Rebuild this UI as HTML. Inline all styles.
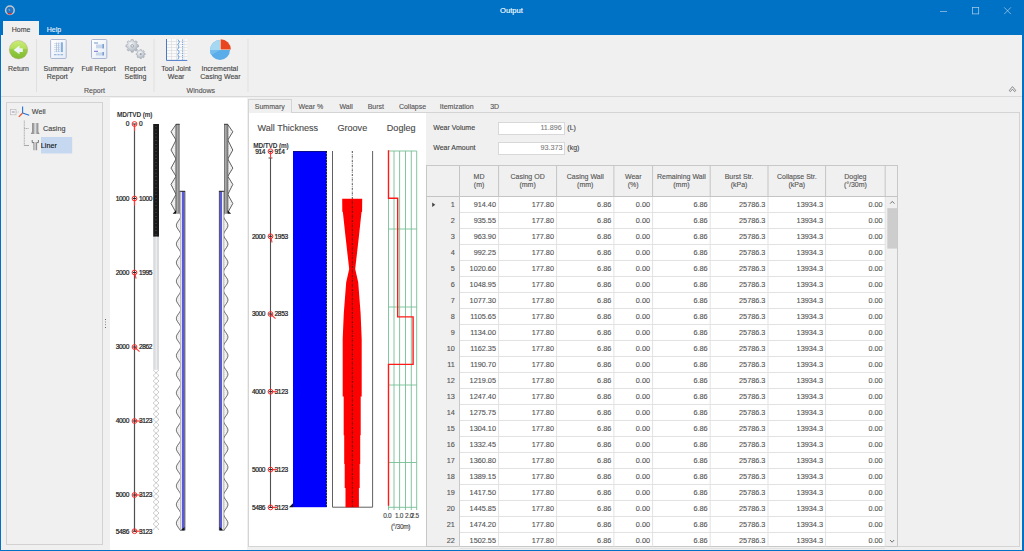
<!DOCTYPE html>
<html><head><meta charset="utf-8">
<style>
*{margin:0;padding:0;box-sizing:border-box}
html,body{width:1024px;height:551px;overflow:hidden}
body{background:#0072c6;position:relative;font-family:"Liberation Sans",sans-serif;font-size:7px;color:#3c3c3c}
.a{position:absolute}
.t{position:absolute;white-space:nowrap;line-height:1;-webkit-text-stroke:0.12px currentColor}
svg{position:absolute;overflow:visible}
</style></head><body>
<!-- title bar -->
<div class="t" style="left:500px;top:7px;font-size:7.6px;color:#fff">Output</div>
<svg style="left:0;top:0" width="1024" height="35">
  <circle cx="9.9" cy="10.3" r="4.3" fill="#1f74c4" stroke="#c4c6ca" stroke-width="1.5"/>
  <path d="M8.2 10 Q10 8 9.6 11" stroke="#8cc0e8" stroke-width="0.6" fill="none"/>
  <path d="M8 13.2 Q9.8 14.6 11.6 13.2" stroke="#d02a2a" stroke-width="1.3" fill="none"/>
  <line x1="940" y1="11.5" x2="947" y2="11.5" stroke="#a9c9ea" stroke-width="0.7"/>
  <rect x="972.4" y="7.6" width="6.3" height="6.3" fill="none" stroke="#b4d0ec" stroke-width="0.7"/>
  <path d="M1004.2 7.4 L1010.9 14.1 M1010.9 7.4 L1004.2 14.1" stroke="#b4d0ec" stroke-width="0.7"/>
</svg>
<!-- ribbon tabs -->
<div class="a" style="left:3px;top:21px;width:35.5px;height:15px;background:#f0f0f0"></div>
<div class="t" style="left:11.8px;top:26.2px;font-size:7px;color:#444">Home</div>
<div class="t" style="left:46.7px;top:26.2px;font-size:7px;color:#e8f0f8">Help</div>
<!-- ribbon body -->
<div class="a" style="left:1px;top:35px;width:1021px;height:62px;background:#f0f0f0;border-bottom:1px solid #d9d9d9"></div>
<!-- main area -->
<div class="a" style="left:1px;top:97px;width:1021px;height:453px;background:#f0f0f0"></div>

<!-- ribbon content -->
<svg style="left:0;top:35px" width="260" height="62">
  <defs>
    <linearGradient id="gGreen" x1="0" y1="0" x2="0" y2="1">
      <stop offset="0" stop-color="#c9ec78"/><stop offset="0.42" stop-color="#b4e05a"/><stop offset="0.5" stop-color="#96cc40"/><stop offset="1" stop-color="#80bc30"/>
    </linearGradient>
    <linearGradient id="gDoc" x1="0" y1="0" x2="1" y2="1">
      <stop offset="0" stop-color="#ffffff"/><stop offset="1" stop-color="#e4ecf6"/>
    </linearGradient>
    <radialGradient id="gGear" cx="0.4" cy="0.35" r="0.7">
      <stop offset="0" stop-color="#f4f6f8"/><stop offset="1" stop-color="#a8b0bc"/>
    </radialGradient>
  </defs>
  <!-- return -->
  <circle cx="18.5" cy="14.7" r="9.2" fill="url(#gGreen)" stroke="#b8a67e" stroke-width="0.5"/>
  <path d="M13.6 15.1 L19.5 10.6 L19.5 13.2 L22.8 13.2 L22.8 17 L19.5 17 L19.5 19.2 Z" fill="#eef4fa"/>
  <line x1="36.5" y1="4" x2="36.5" y2="57" stroke="#e0e0e0" stroke-width="1"/>
  <!-- summary report -->
  <rect x="50.6" y="4.5" width="15.6" height="19" rx="1" fill="url(#gDoc)" stroke="#aab8d6" stroke-width="1"/>
  <g fill="#c4d2e6">
    <rect x="54" y="8" width="6" height="0.7"/><rect x="54" y="10" width="6" height="0.7"/>
    <rect x="54" y="12" width="6" height="0.7"/><rect x="54" y="14" width="6" height="0.7"/>
    <rect x="54" y="16" width="6" height="0.7"/>
  </g>
  <rect x="56" y="7.5" width="0.9" height="9.6" fill="#b0c4e0"/>
  <rect x="58.2" y="7.5" width="0.9" height="9.6" fill="#b0c4e0"/>
  <rect x="60.8" y="7.3" width="2.1" height="9.8" fill="#86aedc"/>
  <rect x="54" y="19.3" width="2.6" height="0.9" fill="#7aa2d4"/><rect x="57.4" y="19.3" width="2.2" height="0.9" fill="#7aa2d4"/><rect x="60.4" y="19.3" width="2.6" height="0.9" fill="#7aa2d4"/>
  <!-- full report -->
  <rect x="91.5" y="4.5" width="15.3" height="19" rx="1" fill="url(#gDoc)" stroke="#a8b6d4" stroke-width="1"/>
  <rect x="94" y="7.5" width="4" height="1" fill="#6f98cc"/>
  <rect x="96" y="9.5" width="7" height="3.8" fill="#c8d6ea"/>
  <rect x="102.5" y="9" width="1.4" height="4.5" fill="#6f98cc"/>
  <rect x="94" y="15.8" width="4" height="1" fill="#7a6fd0"/>
  <rect x="96" y="17.5" width="7" height="3" fill="#c8d6ea"/>
  <rect x="102.5" y="17" width="1.4" height="3.5" fill="#6f98cc"/>
  <!-- gears -->
  <g transform="translate(132.2,10.9) scale(0.84)">
    <path d="M-1.2,-6.2 L1.2,-6.2 L1.6,-4.4 L3,-3.8 L4.6,-4.9 L6.2,-3.3 L5.1,-1.7 L5.7,-0.3 L7.5,0.1 L7.5,2.5 L5.7,2.9 L5.1,4.3 L6.2,5.9 L4.6,7.5 L3,6.4 L1.6,7 L1.2,8.8 L-1.2,8.8 L-1.6,7 L-3,6.4 L-4.6,7.5 L-6.2,5.9 L-5.1,4.3 L-5.7,2.9 L-7.5,2.5 L-7.5,0.1 L-5.7,-0.3 L-5.1,-1.7 L-6.2,-3.3 L-4.6,-4.9 L-3,-3.8 L-1.6,-4.4 Z" transform="translate(0,-1.3)" fill="url(#gGear)" stroke="#8e96a2" stroke-width="0.5"/>
    <circle cx="0" cy="0" r="1.6" fill="#e8eaee" stroke="#7a828e" stroke-width="0.7"/>
  </g>
  <g transform="translate(140.7,19.1) scale(0.6)">
    <path d="M-1.2,-6.2 L1.2,-6.2 L1.6,-4.4 L3,-3.8 L4.6,-4.9 L6.2,-3.3 L5.1,-1.7 L5.7,-0.3 L7.5,0.1 L7.5,2.5 L5.7,2.9 L5.1,4.3 L6.2,5.9 L4.6,7.5 L3,6.4 L1.6,7 L1.2,8.8 L-1.2,8.8 L-1.6,7 L-3,6.4 L-4.6,7.5 L-6.2,5.9 L-5.1,4.3 L-5.7,2.9 L-7.5,2.5 L-7.5,0.1 L-5.7,-0.3 L-5.1,-1.7 L-6.2,-3.3 L-4.6,-4.9 L-3,-3.8 L-1.6,-4.4 Z" transform="translate(0,-1.3)" fill="url(#gGear)" stroke="#8e96a2" stroke-width="0.7"/>
    <circle cx="0" cy="0" r="1.8" fill="#9aa2ae"/>
  </g>
  <line x1="154" y1="4" x2="154" y2="57" stroke="#e0e0e0" stroke-width="1"/>
  <!-- tool joint wear -->
  <rect x="166" y="4" width="21.3" height="21.8" fill="#fafafa"/>
  <g stroke="#d8d8d8" stroke-width="0.6">
    <line x1="166" y1="6.5" x2="187.3" y2="6.5"/><line x1="166" y1="9.5" x2="187.3" y2="9.5"/>
    <line x1="166" y1="12.5" x2="187.3" y2="12.5"/><line x1="166" y1="15.5" x2="187.3" y2="15.5"/>
    <line x1="166" y1="18.5" x2="187.3" y2="18.5"/><line x1="166" y1="21.5" x2="187.3" y2="21.5"/>
    <line x1="171.5" y1="4" x2="171.5" y2="25.5"/><line x1="176.5" y1="4" x2="176.5" y2="25.5"/>
    <line x1="184" y1="4" x2="184" y2="25.5"/>
  </g>
  <path d="M166.5 4 L166.5 25.4 L187.3 25.4" stroke="#4a78c8" stroke-width="1" fill="none"/>
  <path d="M178 4.5 L179.5 7 L177.8 9.5 L179 12 L177.5 14.5 L179.3 17 L177.8 19.5 L179 22 L177.8 24.5" stroke="#5a9ae0" stroke-width="0.9" fill="none"/>
  <line x1="182.5" y1="4.5" x2="182.5" y2="25" stroke="#4a8ee0" stroke-width="0.8" stroke-dasharray="1.2 1"/>
  <!-- pie -->
  <path d="M220 50 L220 40 A10 10 0 1 0 230 50 Z" transform="translate(0,-35)" fill="#5aade8"/>
  <path d="M220 50 L220 40 A10 10 0 0 0 210 50 Z" transform="translate(0,-35)" fill="#a6d8f2"/>
  <path d="M220 50 L210 50 A10 10 0 0 0 211.3 55 Z" transform="translate(0,-35)" fill="#72bdee"/>
  <path d="M220.6 49.4 L220.6 39.2 A10.2 10.2 0 0 1 230.8 49.4 Z" transform="translate(0,-35)" fill="#e8461e"/>
  <line x1="248" y1="4" x2="248" y2="57" stroke="#e0e0e0" stroke-width="1"/>
</svg>
<div class="t" style="left:8px;top:64.5px;color:#444">Return</div>
<div class="t" style="left:43.6px;top:64.7px;color:#444">Summary</div>
<div class="t" style="left:46.8px;top:72.6px;color:#444">Report</div>
<div class="t" style="left:81.4px;top:64.7px;color:#444">Full Report</div>
<div class="t" style="left:124.6px;top:64.7px;color:#444">Report</div>
<div class="t" style="left:124.6px;top:72.6px;color:#444">Setting</div>
<div class="t" style="left:161.2px;top:64.7px;color:#444">Tool Joint</div>
<div class="t" style="left:167.8px;top:72.6px;color:#444">Wear</div>
<div class="t" style="left:201.5px;top:64.7px;color:#444">Incremental</div>
<div class="t" style="left:200.2px;top:72.6px;color:#444">Casing Wear</div>
<div class="t" style="left:84px;top:86.7px;color:#555">Report</div>
<div class="t" style="left:186.6px;top:86.7px;color:#555">Windows</div>
<svg style="left:1005px;top:84px" width="14" height="10">
  <path d="M4.2 6.6 L7.5 2.6 L10.8 6.6 L9.6 7.6 L7.5 5.2 L5.4 7.6 Z" stroke="#707070" stroke-width="0.8" fill="none" stroke-linejoin="round"/>
</svg>

<!-- tree panel -->
<div class="a" style="left:6px;top:102px;width:96.5px;height:443px;border:1px solid #d2d2d2;background:#f0f0f0"></div>
<svg style="left:0;top:100px" width="110" height="60">
  <rect x="10.5" y="9.3" width="5.5" height="5.5" fill="#f4f4f4" stroke="#b4b4b4" stroke-width="0.6"/>
  <line x1="11.8" y1="12" x2="14.7" y2="12" stroke="#5a6e8c" stroke-width="0.7"/>
  <line x1="16.3" y1="12" x2="19" y2="12" stroke="#a0a0a0" stroke-width="0.6" stroke-dasharray="0.8 0.8"/>
  <line x1="22.6" y1="6.5" x2="22.6" y2="13" stroke="#1f73d8" stroke-width="1.1"/>
  <line x1="22.6" y1="13" x2="29.2" y2="15.3" stroke="#1f73d8" stroke-width="1.1"/>
  <line x1="22.6" y1="13" x2="18.8" y2="16.8" stroke="#e8502a" stroke-width="1.2"/>
  <line x1="24.3" y1="20.5" x2="24.3" y2="45.5" stroke="#777" stroke-width="0.6" stroke-dasharray="1 0.6"/>
  <line x1="24.3" y1="28.5" x2="29" y2="28.5" stroke="#777" stroke-width="0.6" stroke-dasharray="1 0.6"/>
  <line x1="24.3" y1="45.5" x2="29" y2="45.5" stroke="#777" stroke-width="0.6"/>
  <!-- casing icon -->
  <defs><linearGradient id="gCas" x1="0" y1="0" x2="1" y2="0">
    <stop offset="0" stop-color="#8a8a8a"/><stop offset="0.3" stop-color="#9c9c9c"/><stop offset="0.5" stop-color="#e6e6e6"/><stop offset="0.7" stop-color="#a0a0a0"/><stop offset="1" stop-color="#858585"/>
  </linearGradient></defs>
  <path d="M30.8 34 L32 31.8 L32 23 L38.4 23 L38.4 31.8 L39.6 34 Z" fill="url(#gCas)"/>
  <!-- liner icon -->
  <path d="M32.2 40 L32.2 42.6 L34 42.6 L34 50.2 M38.4 40 L38.4 42.6 L36.6 42.6 L36.6 50.2" stroke="#5a5a5a" stroke-width="0.8" fill="none"/>
  <rect x="34.4" y="42" width="1.8" height="8.2" fill="#c8c8c8"/>
  <rect x="41" y="37" width="31.2" height="16.5" fill="#c5d8f0"/>
</svg>
<div class="t" style="left:31.8px;top:107.8px;color:#444;font-size:7.2px">Well</div>
<div class="t" style="left:43px;top:124.7px;color:#444;font-size:7.2px">Casing</div>
<div class="t" style="left:40.8px;top:141.9px;color:#111;font-size:7.2px">Liner</div>
<svg style="left:100px;top:310px" width="10" height="20">
  <rect x="5" y="9" width="1" height="1" fill="#666"/><rect x="5" y="11.5" width="1" height="1" fill="#888"/>
  <rect x="5" y="14.2" width="1" height="1" fill="#888"/><rect x="5" y="17" width="1" height="1" fill="#666"/>
</svg>

<!--SCHEM--><!-- schematic -->
<div class="a" style="left:110px;top:98px;width:137px;height:452px;background:#fff"></div>
<svg style="left:0;top:0" width="1024" height="551">
<line x1="134.5" y1="126" x2="134.5" y2="531.5" stroke="#505050" stroke-width="1.2"/>
<line x1="134.5" y1="124" x2="134.5" y2="131" stroke="#f03030" stroke-width="1"/>
<line x1="134.5" y1="124" x2="134.5" y2="131" stroke="#ff3a3a" stroke-width="1.1"/>
<circle cx="134.5" cy="124" r="2.4" fill="none" stroke="#ff2828" stroke-width="1"/>
<line x1="132.8" y1="124" x2="136.2" y2="124" stroke="#222" stroke-width="1"/>
<line x1="134.5" y1="198.5" x2="134.5" y2="205.5" stroke="#ff3a3a" stroke-width="1.1"/>
<circle cx="134.5" cy="198.5" r="2.4" fill="none" stroke="#ff2828" stroke-width="1"/>
<line x1="132.8" y1="198.5" x2="136.2" y2="198.5" stroke="#222" stroke-width="1"/>
<line x1="134.5" y1="272.5" x2="136.1" y2="278.7" stroke="#ff3a3a" stroke-width="1.1"/>
<circle cx="134.5" cy="272.5" r="2.4" fill="none" stroke="#ff2828" stroke-width="1"/>
<line x1="132.8" y1="272.5" x2="136.2" y2="272.5" stroke="#222" stroke-width="1"/>
<line x1="134.5" y1="347" x2="139.5" y2="351.6" stroke="#ff3a3a" stroke-width="1.1"/>
<circle cx="134.5" cy="347" r="2.4" fill="none" stroke="#ff2828" stroke-width="1"/>
<line x1="132.8" y1="347" x2="136.2" y2="347" stroke="#222" stroke-width="1"/>
<line x1="134.5" y1="421" x2="141.3" y2="421" stroke="#ff3a3a" stroke-width="1.1"/>
<circle cx="134.5" cy="421" r="2.4" fill="none" stroke="#ff2828" stroke-width="1"/>
<line x1="132.8" y1="421" x2="136.2" y2="421" stroke="#222" stroke-width="1"/>
<line x1="134.5" y1="495" x2="141.3" y2="495" stroke="#ff3a3a" stroke-width="1.1"/>
<circle cx="134.5" cy="495" r="2.4" fill="none" stroke="#ff2828" stroke-width="1"/>
<line x1="132.8" y1="495" x2="136.2" y2="495" stroke="#222" stroke-width="1"/>
<line x1="134.5" y1="531.2" x2="141.3" y2="531.2" stroke="#ff3a3a" stroke-width="1.1"/>
<circle cx="134.5" cy="531.2" r="2.4" fill="none" stroke="#ff2828" stroke-width="1"/>
<line x1="132.8" y1="531.2" x2="136.2" y2="531.2" stroke="#222" stroke-width="1"/>
<rect x="153.2" y="124" width="5.8" height="112.8" fill="#1a1a1a"/>
<line x1="156" y1="126" x2="156" y2="236" stroke="#bbb" stroke-width="0.6" stroke-dasharray="0.6 3"/>
<rect x="153.2" y="236.8" width="5.8" height="133" fill="#d9dbde"/>
<rect x="155.5" y="236.8" width="1.4" height="133" fill="#eceef0"/>
<defs><pattern id="xh" x="153.2" y="370" width="5.8" height="5.5" patternUnits="userSpaceOnUse"><path d="M0 0 L5.8 5.5 M5.8 0 L0 5.5" stroke="#a8a8a8" stroke-width="0.6"/></pattern>
<pattern id="dots" width="2" height="2" patternUnits="userSpaceOnUse"><rect width="2" height="2" fill="#f2f2f2"/><rect x="0" y="0" width="0.7" height="0.7" fill="#d8d8d8"/></pattern></defs>
<rect x="153.2" y="370" width="5.8" height="160" fill="url(#xh)"/>
<path d="M176.00 124.50 L171.00 131.80 L176.00 140.00 L171.00 150.00 L176.00 159.00 L171.00 168.10 L176.00 176.30 L171.00 184.40 L176.00 194.40 L171.00 203.50 L176.00 212.60 Z" fill="url(#dots)" stroke="#454545" stroke-width="0.85" stroke-linejoin="round"/>
<path d="M227.80 124.50 L232.80 131.80 L227.80 140.00 L232.80 150.00 L227.80 159.00 L232.80 168.10 L227.80 176.30 L232.80 184.40 L227.80 194.40 L232.80 203.50 L227.80 212.60 Z" fill="url(#dots)" stroke="#454545" stroke-width="0.85" stroke-linejoin="round"/>
<path d="M180.70 213.80 L180.09 213.80 L180.50 214.80 L180.69 215.80 L180.64 216.80 L180.36 217.79 L179.87 218.79 L179.23 219.79 L178.52 220.79 L177.81 221.79 L177.18 222.79 L176.71 223.78 L176.45 224.78 L176.42 225.78 L176.63 226.78 L177.06 227.78 L177.65 228.78 L178.35 229.77 L179.07 230.77 L179.73 231.77 L180.26 232.77 L180.59 233.77 L180.70 234.77 L180.56 235.77 L180.20 236.76 L179.65 237.76 L178.98 238.76 L178.26 239.76 L177.57 240.76 L176.99 241.76 L176.59 242.75 L176.41 243.75 L176.47 244.75 L176.76 245.75 L177.26 246.75 L177.90 247.75 L178.61 248.74 L179.32 249.74 L179.94 250.74 L180.40 251.74 L180.66 252.74 L180.68 253.74 L180.46 254.74 L180.02 255.73 L179.42 256.73 L178.72 257.73 L178.00 258.73 L177.35 259.73 L176.82 260.73 L176.50 261.72 L176.40 262.72 L176.55 263.72 L176.92 264.72 L177.47 265.72 L178.15 266.72 L178.87 267.71 L179.56 268.71 L180.13 269.71 L180.52 270.71 L180.69 271.71 L180.63 272.71 L180.32 273.71 L179.82 274.70 L179.18 275.70 L178.46 276.70 L177.76 277.70 L177.14 278.70 L176.68 279.70 L176.44 280.69 L176.43 281.69 L176.66 282.69 L177.10 283.69 L177.71 284.69 L178.41 285.69 L179.13 286.68 L179.78 287.68 L180.29 288.68 L180.61 289.68 L180.70 290.68 L180.54 291.68 L180.16 292.68 L179.60 293.67 L178.92 294.67 L178.20 295.67 L177.52 296.67 L176.95 297.67 L176.57 298.67 L176.40 299.66 L176.48 300.66 L176.79 301.66 L177.30 302.66 L177.95 303.66 L178.67 304.66 L179.37 305.65 L179.98 306.65 L180.43 307.65 L180.67 308.65 L180.67 309.65 L180.43 310.65 L179.98 311.65 L179.37 312.64 L178.66 313.64 L177.95 314.64 L177.30 315.64 L176.79 316.64 L176.48 317.64 L176.40 318.63 L176.57 319.63 L176.96 320.63 L177.52 321.63 L178.21 322.63 L178.93 323.63 L179.61 324.62 L180.17 325.62 L180.54 326.62 L180.70 327.62 L180.61 328.62 L180.29 329.62 L179.77 330.62 L179.12 331.61 L178.40 332.61 L177.70 333.61 L177.10 334.61 L176.65 335.61 L176.43 336.61 L176.44 337.60 L176.69 338.60 L177.14 339.60 L177.76 340.60 L178.47 341.60 L179.18 342.60 L179.83 343.59 L180.33 344.59 L180.63 345.59 L180.69 346.59 L180.52 347.59 L180.12 348.59 L179.55 349.59 L178.86 350.58 L178.14 351.58 L177.47 352.58 L176.91 353.58 L176.54 354.58 L176.40 355.58 L176.50 356.57 L176.83 357.57 L177.35 358.57 L178.01 359.57 L178.73 360.57 L179.43 361.57 L180.03 362.56 L180.46 363.56 L180.68 364.56 L180.66 365.56 L180.40 366.56 L179.93 367.56 L179.31 368.56 L178.60 369.55 L177.89 370.55 L177.25 371.55 L176.76 372.55 L176.47 373.55 L176.41 374.55 L176.59 375.54 L177.00 376.54 L177.58 377.54 L178.27 378.54 L178.99 379.54 L179.66 380.54 L180.21 381.54 L180.57 382.53 L180.70 383.53 L180.59 384.53 L180.25 385.53 L179.72 386.53 L179.06 387.53 L178.34 388.52 L177.65 389.52 L177.05 390.52 L176.63 391.52 L176.42 392.52 L176.45 393.52 L176.72 394.51 L177.19 395.51 L177.82 396.51 L178.53 397.51 L179.24 398.51 L179.87 399.51 L180.36 400.51 L180.64 401.50 L180.69 402.50 L180.49 403.50 L180.08 404.50 L179.50 405.50 L178.80 406.50 L178.08 407.49 L177.42 408.49 L176.88 409.49 L176.52 410.49 L176.40 411.49 L176.52 412.49 L176.86 413.48 L177.40 414.48 L178.07 415.48 L178.79 416.48 L179.48 417.48 L180.07 418.48 L180.49 419.48 L180.69 420.47 L180.65 421.47 L180.37 422.47 L179.89 423.47 L179.26 424.47 L178.54 425.47 L177.83 426.46 L177.20 427.46 L176.72 428.46 L176.45 429.46 L176.41 430.46 L176.62 431.46 L177.04 432.45 L177.63 433.45 L178.32 434.45 L179.04 435.45 L179.71 436.45 L180.24 437.45 L180.59 438.45 L180.70 439.44 L180.57 440.44 L180.22 441.44 L179.67 442.44 L179.00 443.44 L178.28 444.44 L177.59 445.43 L177.01 446.43 L176.60 447.43 L176.41 448.43 L176.46 449.43 L176.75 450.43 L177.24 451.42 L177.87 452.42 L178.59 453.42 L179.29 454.42 L179.92 455.42 L180.39 456.42 L180.65 457.42 L180.68 458.41 L180.47 459.41 L180.04 460.41 L179.44 461.41 L178.75 462.41 L178.03 463.41 L177.37 464.40 L176.84 465.40 L176.50 466.40 L176.40 467.40 L176.54 468.40 L176.90 469.40 L177.45 470.39 L178.12 471.39 L178.85 472.39 L179.53 473.39 L180.11 474.39 L180.51 475.39 L180.69 476.39 L180.63 477.38 L180.34 478.38 L179.84 479.38 L179.20 480.38 L178.48 481.38 L177.78 482.38 L177.16 483.37 L176.69 484.37 L176.44 485.37 L176.42 486.37 L176.65 487.37 L177.08 488.37 L177.68 489.36 L178.38 490.36 L179.10 491.36 L179.76 492.36 L180.28 493.36 L180.60 494.36 L180.70 495.36 L180.55 496.35 L180.18 497.35 L179.62 498.35 L178.95 499.35 L178.22 500.35 L177.54 501.35 L176.97 502.34 L176.58 503.34 L176.41 504.34 L176.48 505.34 L176.78 506.34 L177.28 507.34 L177.93 508.33 L178.64 509.33 L179.35 510.33 L179.96 511.33 L180.42 512.33 L180.67 513.33 L180.67 514.33 L180.44 515.32 L180.00 516.32 L179.39 517.32 L178.69 518.32 L177.97 519.32 L177.32 520.32 L176.80 521.31 L176.49 522.31 L176.40 523.31 L176.56 524.31 L176.94 525.31 L177.50 526.31 L178.18 527.30 L178.90 528.30 L179.59 529.30 L180.15 530.30 L180.70 530.30 Z" fill="url(#dots)" stroke="#454545" stroke-width="0.85" stroke-linejoin="round"/>
<path d="M223.60 213.80 L224.21 213.80 L223.80 214.80 L223.61 215.80 L223.66 216.80 L223.94 217.79 L224.43 218.79 L225.07 219.79 L225.78 220.79 L226.49 221.79 L227.12 222.79 L227.59 223.78 L227.85 224.78 L227.88 225.78 L227.67 226.78 L227.24 227.78 L226.65 228.78 L225.95 229.77 L225.23 230.77 L224.57 231.77 L224.04 232.77 L223.71 233.77 L223.60 234.77 L223.74 235.77 L224.10 236.76 L224.65 237.76 L225.32 238.76 L226.04 239.76 L226.73 240.76 L227.31 241.76 L227.71 242.75 L227.89 243.75 L227.83 244.75 L227.54 245.75 L227.04 246.75 L226.40 247.75 L225.69 248.74 L224.98 249.74 L224.36 250.74 L223.90 251.74 L223.64 252.74 L223.62 253.74 L223.84 254.74 L224.28 255.73 L224.88 256.73 L225.58 257.73 L226.30 258.73 L226.95 259.73 L227.48 260.73 L227.80 261.72 L227.90 262.72 L227.75 263.72 L227.38 264.72 L226.83 265.72 L226.15 266.72 L225.43 267.71 L224.74 268.71 L224.17 269.71 L223.78 270.71 L223.61 271.71 L223.67 272.71 L223.98 273.71 L224.48 274.70 L225.12 275.70 L225.84 276.70 L226.54 277.70 L227.16 278.70 L227.62 279.70 L227.86 280.69 L227.87 281.69 L227.64 282.69 L227.20 283.69 L226.59 284.69 L225.89 285.69 L225.17 286.68 L224.52 287.68 L224.01 288.68 L223.69 289.68 L223.60 290.68 L223.76 291.68 L224.14 292.68 L224.70 293.67 L225.38 294.67 L226.10 295.67 L226.78 296.67 L227.35 297.67 L227.73 298.67 L227.90 299.66 L227.82 300.66 L227.51 301.66 L227.00 302.66 L226.35 303.66 L225.63 304.66 L224.93 305.65 L224.32 306.65 L223.87 307.65 L223.63 308.65 L223.63 309.65 L223.87 310.65 L224.32 311.65 L224.93 312.64 L225.64 313.64 L226.35 314.64 L227.00 315.64 L227.51 316.64 L227.82 317.64 L227.90 318.63 L227.73 319.63 L227.34 320.63 L226.78 321.63 L226.09 322.63 L225.37 323.63 L224.69 324.62 L224.13 325.62 L223.76 326.62 L223.60 327.62 L223.69 328.62 L224.01 329.62 L224.53 330.62 L225.18 331.61 L225.90 332.61 L226.60 333.61 L227.20 334.61 L227.65 335.61 L227.87 336.61 L227.86 337.60 L227.61 338.60 L227.16 339.60 L226.54 340.60 L225.83 341.60 L225.12 342.60 L224.47 343.59 L223.97 344.59 L223.67 345.59 L223.61 346.59 L223.78 347.59 L224.18 348.59 L224.75 349.59 L225.44 350.58 L226.16 351.58 L226.83 352.58 L227.39 353.58 L227.76 354.58 L227.90 355.58 L227.80 356.57 L227.47 357.57 L226.95 358.57 L226.29 359.57 L225.57 360.57 L224.87 361.57 L224.27 362.56 L223.84 363.56 L223.62 364.56 L223.64 365.56 L223.90 366.56 L224.37 367.56 L224.99 368.56 L225.70 369.55 L226.41 370.55 L227.05 371.55 L227.54 372.55 L227.83 373.55 L227.89 374.55 L227.71 375.54 L227.30 376.54 L226.72 377.54 L226.03 378.54 L225.31 379.54 L224.64 380.54 L224.09 381.54 L223.73 382.53 L223.60 383.53 L223.71 384.53 L224.05 385.53 L224.58 386.53 L225.24 387.53 L225.96 388.52 L226.65 389.52 L227.25 390.52 L227.67 391.52 L227.88 392.52 L227.85 393.52 L227.58 394.51 L227.11 395.51 L226.48 396.51 L225.77 397.51 L225.06 398.51 L224.43 399.51 L223.94 400.51 L223.66 401.50 L223.61 402.50 L223.81 403.50 L224.22 404.50 L224.80 405.50 L225.50 406.50 L226.22 407.49 L226.88 408.49 L227.42 409.49 L227.78 410.49 L227.90 411.49 L227.78 412.49 L227.44 413.48 L226.90 414.48 L226.23 415.48 L225.51 416.48 L224.82 417.48 L224.23 418.48 L223.81 419.48 L223.61 420.47 L223.65 421.47 L223.93 422.47 L224.41 423.47 L225.04 424.47 L225.76 425.47 L226.47 426.46 L227.10 427.46 L227.58 428.46 L227.85 429.46 L227.89 430.46 L227.68 431.46 L227.26 432.45 L226.67 433.45 L225.98 434.45 L225.26 435.45 L224.59 436.45 L224.06 437.45 L223.71 438.45 L223.60 439.44 L223.73 440.44 L224.08 441.44 L224.63 442.44 L225.30 443.44 L226.02 444.44 L226.71 445.43 L227.29 446.43 L227.70 447.43 L227.89 448.43 L227.84 449.43 L227.55 450.43 L227.06 451.42 L226.43 452.42 L225.71 453.42 L225.01 454.42 L224.38 455.42 L223.91 456.42 L223.65 457.42 L223.62 458.41 L223.83 459.41 L224.26 460.41 L224.86 461.41 L225.55 462.41 L226.27 463.41 L226.93 464.40 L227.46 465.40 L227.80 466.40 L227.90 467.40 L227.76 468.40 L227.40 469.40 L226.85 470.39 L226.18 471.39 L225.45 472.39 L224.77 473.39 L224.19 474.39 L223.79 475.39 L223.61 476.39 L223.67 477.38 L223.96 478.38 L224.46 479.38 L225.10 480.38 L225.82 481.38 L226.52 482.38 L227.14 483.37 L227.61 484.37 L227.86 485.37 L227.88 486.37 L227.65 487.37 L227.22 488.37 L226.62 489.36 L225.92 490.36 L225.20 491.36 L224.54 492.36 L224.02 493.36 L223.70 494.36 L223.60 495.36 L223.75 496.35 L224.12 497.35 L224.68 498.35 L225.35 499.35 L226.08 500.35 L226.76 501.35 L227.33 502.34 L227.72 503.34 L227.89 504.34 L227.82 505.34 L227.52 506.34 L227.02 507.34 L226.37 508.33 L225.66 509.33 L224.95 510.33 L224.34 511.33 L223.88 512.33 L223.63 513.33 L223.63 514.33 L223.86 515.32 L224.30 516.32 L224.91 517.32 L225.61 518.32 L226.33 519.32 L226.98 520.32 L227.50 521.31 L227.81 522.31 L227.90 523.31 L227.74 524.31 L227.36 525.31 L226.80 526.31 L226.12 527.30 L225.40 528.30 L224.71 529.30 L224.15 530.30 L223.60 530.30 Z" fill="url(#dots)" stroke="#454545" stroke-width="0.85" stroke-linejoin="round"/>
<rect x="175.8" y="124.2" width="3.9" height="89.4" fill="#7a7a7a"/>
<rect x="176.8" y="124.2" width="1.6" height="89.4" fill="#a8a8a8"/>
<rect x="175.8" y="123.8" width="3.9" height="1" fill="#3a3a3a"/>
<rect x="224" y="124.2" width="3.9" height="89.4" fill="#7a7a7a"/>
<rect x="225.0" y="124.2" width="1.6" height="89.4" fill="#a8a8a8"/>
<rect x="224" y="123.8" width="3.9" height="1" fill="#3a3a3a"/>
<path d="M176 213.8 L172.6 213.8 L176 210.2 Z" fill="#111"/>
<path d="M227.7 213.8 L231.1 213.8 L227.7 210.2 Z" fill="#111"/>
<rect x="180.4" y="191.3" width="4.3" height="339" fill="#f0f0f0"/>
<rect x="181.9" y="191.3" width="2.7" height="339" fill="#5a5ad8"/>
<rect x="184.6" y="191.3" width="0.7" height="339" fill="#333"/>
<rect x="179.6" y="190.8" width="5.5" height="1" fill="#222"/>
<rect x="179.6" y="191.3" width="0.8" height="22.5" fill="#666"/>
<rect x="219.4" y="191.3" width="4.3" height="339" fill="#f0f0f0"/>
<rect x="219.4" y="191.3" width="2.6" height="339" fill="#5a5ad8"/>
<rect x="218.9" y="191.3" width="0.7" height="339" fill="#333"/>
<rect x="218.9" y="190.8" width="5.5" height="1" fill="#222"/>
<rect x="223.6" y="191.3" width="0.8" height="22.5" fill="#666"/>
<path d="M184.5 530.5 L180.5 530.5 L184.5 527 Z" fill="#111"/>
<path d="M219.6 530.5 L223.6 530.5 L219.6 527 Z" fill="#111"/>
</svg>
<div class="t" style="left:117px;top:112.2px;font-size:6.5px;font-weight:bold;letter-spacing:-0.15px;color:#333;-webkit-text-stroke:0">MD/TVD (m)</div>
<div class="t" style="right:895.1px;top:121.4px;font-size:6.6px;letter-spacing:-0.4px;color:#222;-webkit-text-stroke:0.22px #222">0</div>
<div class="t" style="left:139px;top:121.4px;font-size:6.6px;letter-spacing:-0.4px;color:#222;-webkit-text-stroke:0.22px #222">0</div>
<div class="t" style="right:895.1px;top:195.9px;font-size:6.6px;letter-spacing:-0.4px;color:#222;-webkit-text-stroke:0.22px #222">1000</div>
<div class="t" style="left:139px;top:195.9px;font-size:6.6px;letter-spacing:-0.4px;color:#222;-webkit-text-stroke:0.22px #222">1000</div>
<div class="t" style="right:895.1px;top:269.9px;font-size:6.6px;letter-spacing:-0.4px;color:#222;-webkit-text-stroke:0.22px #222">2000</div>
<div class="t" style="left:139px;top:269.9px;font-size:6.6px;letter-spacing:-0.4px;color:#222;-webkit-text-stroke:0.22px #222">1995</div>
<div class="t" style="right:895.1px;top:344.4px;font-size:6.6px;letter-spacing:-0.4px;color:#222;-webkit-text-stroke:0.22px #222">3000</div>
<div class="t" style="left:139px;top:344.4px;font-size:6.6px;letter-spacing:-0.4px;color:#222;-webkit-text-stroke:0.22px #222">2862</div>
<div class="t" style="right:895.1px;top:418.4px;font-size:6.6px;letter-spacing:-0.4px;color:#222;-webkit-text-stroke:0.22px #222">4000</div>
<div class="t" style="left:139px;top:418.4px;font-size:6.6px;letter-spacing:-0.4px;color:#222;-webkit-text-stroke:0.22px #222">3123</div>
<div class="t" style="right:895.1px;top:492.4px;font-size:6.6px;letter-spacing:-0.4px;color:#222;-webkit-text-stroke:0.22px #222">5000</div>
<div class="t" style="left:139px;top:492.4px;font-size:6.6px;letter-spacing:-0.4px;color:#222;-webkit-text-stroke:0.22px #222">3123</div>
<div class="t" style="right:895.1px;top:528.6px;font-size:6.6px;letter-spacing:-0.4px;color:#222;-webkit-text-stroke:0.22px #222">5486</div>
<div class="t" style="left:139px;top:528.6px;font-size:6.6px;letter-spacing:-0.4px;color:#222;-webkit-text-stroke:0.22px #222">3123</div>
<!--/SCHEM-->
<!--TABS--><!-- tab control -->
<div class="a" style="left:247.5px;top:112.3px;width:772.5px;height:435.2px;border:1px solid #d4d4d4;background:#f0f0f0"></div>
<div class="a" style="left:247.5px;top:98.5px;width:44.2px;height:15px;border:1px solid #d4d4d4;border-bottom:none;background:#f0f0f0"></div>
<div class="a" style="left:248.5px;top:113.3px;width:177.8px;height:433.2px;background:#fff"></div>
<div class="t" style="left:254.8px;top:102.6px;color:#555">Summary</div>
<div class="t" style="left:298.5px;top:102.6px;color:#555">Wear %</div>
<div class="t" style="left:339.5px;top:102.6px;color:#555">Wall</div>
<div class="t" style="left:367.7px;top:102.6px;color:#555">Burst</div>
<div class="t" style="left:398.9px;top:102.6px;color:#555">Collapse</div>
<div class="t" style="left:439.8px;top:102.6px;color:#555">Itemization</div>
<div class="t" style="left:490.2px;top:102.6px;color:#555">3D</div>
<div class="t" style="left:257.5px;top:123.9px;font-size:9.1px;color:#4a4a4a">Wall Thickness</div>
<div class="t" style="left:337.4px;top:123.9px;font-size:9.1px;color:#4a4a4a">Groove</div>
<div class="t" style="left:386.8px;top:123.9px;font-size:9.1px;color:#4a4a4a">Dogleg</div>
<div class="t" style="left:253.3px;top:142.6px;font-size:6.5px;font-weight:bold;letter-spacing:-0.15px;color:#333;-webkit-text-stroke:0">MD/TVD (m)</div>
<div class="t" style="right:758.9px;top:148.7px;font-size:6.6px;letter-spacing:-0.4px;color:#222;-webkit-text-stroke:0.22px #222">914</div>
<div class="t" style="left:274.6px;top:148.7px;font-size:6.6px;letter-spacing:-0.4px;color:#222;-webkit-text-stroke:0.22px #222">914</div>
<div class="t" style="right:758.9px;top:233.7px;font-size:6.6px;letter-spacing:-0.4px;color:#222;-webkit-text-stroke:0.22px #222">2000</div>
<div class="t" style="left:274.6px;top:233.7px;font-size:6.6px;letter-spacing:-0.4px;color:#222;-webkit-text-stroke:0.22px #222">1953</div>
<div class="t" style="right:758.9px;top:311.4px;font-size:6.6px;letter-spacing:-0.4px;color:#222;-webkit-text-stroke:0.22px #222">3000</div>
<div class="t" style="left:274.6px;top:311.4px;font-size:6.6px;letter-spacing:-0.4px;color:#222;-webkit-text-stroke:0.22px #222">2853</div>
<div class="t" style="right:758.9px;top:389.1px;font-size:6.6px;letter-spacing:-0.4px;color:#222;-webkit-text-stroke:0.22px #222">4000</div>
<div class="t" style="left:274.6px;top:389.1px;font-size:6.6px;letter-spacing:-0.4px;color:#222;-webkit-text-stroke:0.22px #222">3123</div>
<div class="t" style="right:758.9px;top:467.0px;font-size:6.6px;letter-spacing:-0.4px;color:#222;-webkit-text-stroke:0.22px #222">5000</div>
<div class="t" style="left:274.6px;top:467.0px;font-size:6.6px;letter-spacing:-0.4px;color:#222;-webkit-text-stroke:0.22px #222">3123</div>
<div class="t" style="right:758.9px;top:504.8px;font-size:6.6px;letter-spacing:-0.4px;color:#222;-webkit-text-stroke:0.22px #222">5486</div>
<div class="t" style="left:274.6px;top:504.8px;font-size:6.6px;letter-spacing:-0.4px;color:#222;-webkit-text-stroke:0.22px #222">3123</div>
<svg style="left:0;top:0" width="1024" height="551">
<line x1="270.5" y1="157" x2="270.5" y2="507.4" stroke="#505050" stroke-width="1.1"/>
<line x1="268.5" y1="158" x2="272.5" y2="158" stroke="#333" stroke-width="0.8"/>
<line x1="270.5" y1="151.3" x2="270.5" y2="158.3" stroke="#ff3a3a" stroke-width="1.1"/>
<circle cx="270.5" cy="151.3" r="2.4" fill="none" stroke="#ff2828" stroke-width="1"/>
<line x1="268.8" y1="151.3" x2="272.2" y2="151.3" stroke="#222" stroke-width="1"/>
<line x1="270.5" y1="236.3" x2="272.1" y2="242.5" stroke="#ff3a3a" stroke-width="1.1"/>
<circle cx="270.5" cy="236.3" r="2.4" fill="none" stroke="#ff2828" stroke-width="1"/>
<line x1="268.8" y1="236.3" x2="272.2" y2="236.3" stroke="#222" stroke-width="1"/>
<line x1="270.5" y1="314" x2="275.5" y2="318.6" stroke="#ff3a3a" stroke-width="1.1"/>
<circle cx="270.5" cy="314" r="2.4" fill="none" stroke="#ff2828" stroke-width="1"/>
<line x1="268.8" y1="314" x2="272.2" y2="314" stroke="#222" stroke-width="1"/>
<line x1="270.5" y1="391.7" x2="277.3" y2="391.7" stroke="#ff3a3a" stroke-width="1.1"/>
<circle cx="270.5" cy="391.7" r="2.4" fill="none" stroke="#ff2828" stroke-width="1"/>
<line x1="268.8" y1="391.7" x2="272.2" y2="391.7" stroke="#222" stroke-width="1"/>
<line x1="270.5" y1="469.6" x2="277.3" y2="469.6" stroke="#ff3a3a" stroke-width="1.1"/>
<circle cx="270.5" cy="469.6" r="2.4" fill="none" stroke="#ff2828" stroke-width="1"/>
<line x1="268.8" y1="469.6" x2="272.2" y2="469.6" stroke="#222" stroke-width="1"/>
<line x1="270.5" y1="507.4" x2="277.3" y2="507.4" stroke="#ff3a3a" stroke-width="1.1"/>
<circle cx="270.5" cy="507.4" r="2.4" fill="none" stroke="#ff2828" stroke-width="1"/>
<line x1="268.8" y1="507.4" x2="272.2" y2="507.4" stroke="#222" stroke-width="1"/>
<rect x="293" y="151.2" width="33.6" height="356" fill="#0000ff"/>
<line x1="293" y1="151.5" x2="326.6" y2="151.5" stroke="#000070" stroke-width="0.8"/>
<line x1="326.4" y1="151.2" x2="326.4" y2="507.2" stroke="#000" stroke-width="1" stroke-dasharray="1.6 1.4"/>
<path d="M293 507.3 L289 507.3 L293 503.3 Z" fill="#111"/>
<path d="M332.5 151 L332.5 507.2 L372.6 507.2 L372.6 151" fill="none" stroke="#606060" stroke-width="1"/>
<path d="M342.2 198.8 L342.3 211.5 L342.9 212.2 L345.5 236.4 L349.2 269.1 L346.2 282.2 L343.8 313.3 L342.7 339.1 L342.7 396.4 L343.7 396.4 L343.7 435.2 L344.2 435.2 L344.2 464.0 L344.7 464.0 L344.7 488.0 L345.5 488.0 L345.5 507.2 L358.9 507.2 L358.9 488.0 L359.7 488.0 L359.7 464.0 L360.2 464.0 L360.2 435.2 L360.7 435.2 L360.7 396.4 L361.7 396.4 L361.7 339.1 L360.6 313.3 L358.2 282.2 L355.2 269.1 L358.9 236.4 L361.5 212.2 L362.1 211.5 L362.2 198.8 Z" fill="#ff0000"/>
<line x1="352.3" y1="151" x2="352.3" y2="507" stroke="#222" stroke-width="0.8" stroke-dasharray="2 1 0.6 1"/>
<line x1="388.5" y1="151" x2="388.5" y2="510" stroke="#74c094" stroke-width="0.9"/>
<line x1="394" y1="151" x2="394" y2="510" stroke="#74c094" stroke-width="0.9"/>
<line x1="399.6" y1="151" x2="399.6" y2="510" stroke="#74c094" stroke-width="0.9"/>
<line x1="405.5" y1="151" x2="405.5" y2="510" stroke="#74c094" stroke-width="0.9"/>
<line x1="411.3" y1="151" x2="411.3" y2="510" stroke="#74c094" stroke-width="0.9"/>
<line x1="416.7" y1="151" x2="416.7" y2="510" stroke="#74c094" stroke-width="0.9"/>
<line x1="388.5" y1="151" x2="416.7" y2="151" stroke="#74c094" stroke-width="0.9"/>
<line x1="388.5" y1="229" x2="416.7" y2="229" stroke="#74c094" stroke-width="0.9"/>
<line x1="388.5" y1="307" x2="416.7" y2="307" stroke="#74c094" stroke-width="0.9"/>
<line x1="388.5" y1="385" x2="416.7" y2="385" stroke="#74c094" stroke-width="0.9"/>
<line x1="388.5" y1="462.5" x2="416.7" y2="462.5" stroke="#74c094" stroke-width="0.9"/>
<line x1="388.5" y1="507.3" x2="416.7" y2="507.3" stroke="#74c094" stroke-width="0.9"/>
<path d="M388.5 150.3 L388.5 198.2 L397.7 198.2 L397.7 316.9 L413.1 316.9 L413.1 364.4 L388.5 364.4 L388.5 505.8" fill="none" stroke="#ff1a1a" stroke-width="1.4"/>
</svg>
<div class="t" style="left:383.3px;top:513px;font-size:6.5px;letter-spacing:-0.3px;color:#444">0.0</div>
<div class="t" style="left:394.9px;top:513px;font-size:6.5px;letter-spacing:-0.3px;color:#444">1.0</div>
<div class="t" style="left:405px;top:513px;font-size:6.5px;letter-spacing:-0.3px;color:#444">2.0</div>
<div class="t" style="left:410.8px;top:513px;font-size:6.5px;letter-spacing:-0.3px;color:#444">2.5</div>
<div class="t" style="left:390.9px;top:524.4px;font-size:6.5px;letter-spacing:-0.3px;color:#444">(&deg;/30m)</div>
<!--/TABS-->
<!--GRID--><!-- wear inputs -->
<div class="t" style="left:433.2px;top:124.2px;color:#444">Wear Volume</div>
<div class="t" style="left:433.2px;top:144.2px;color:#444">Wear Amount</div>
<div class="a" style="left:498px;top:121.5px;width:66.6px;height:13.3px;background:#fff;border:1px solid #d8d8d8"></div>
<div class="a" style="left:498px;top:141.6px;width:66.6px;height:13px;background:#fff;border:1px solid #d8d8d8"></div>
<div class="t" style="right:462px;top:124.3px;color:#808080;font-size:8px;transform:scaleX(0.9);transform-origin:right top">11.896</div>
<div class="t" style="right:462px;top:144.3px;color:#808080;font-size:8px;transform:scaleX(0.9);transform-origin:right top">93.373</div>
<div class="t" style="left:567.3px;top:124.2px;color:#444">(L)</div>
<div class="t" style="left:567.3px;top:144.2px;color:#444">(kg)</div>
<div class="a" style="left:426.3px;top:164.5px;width:471.90000000000003px;height:382.0px;background:#fff;border:1px solid #c8c8c8"></div>
<div class="a" style="left:427.3px;top:165.5px;width:469.90000000000003px;height:31.0px;background:#f0f0f0"></div>
<div class="a" style="left:427.3px;top:196.5px;width:32.19999999999999px;height:349.0px;background:#f0f0f0"></div>
<div class="a" style="left:885.2px;top:196.5px;width:12.0px;height:349.0px;background:#f0f0f0"></div>
<svg style="left:0;top:0" width="1024" height="551">
<line x1="459.5" y1="212.5" x2="885.2" y2="212.5" stroke="#e2e2e2" stroke-width="1"/>
<line x1="459.5" y1="228.5" x2="885.2" y2="228.5" stroke="#e2e2e2" stroke-width="1"/>
<line x1="459.5" y1="244.5" x2="885.2" y2="244.5" stroke="#e2e2e2" stroke-width="1"/>
<line x1="459.5" y1="260.5" x2="885.2" y2="260.5" stroke="#e2e2e2" stroke-width="1"/>
<line x1="459.5" y1="276.5" x2="885.2" y2="276.5" stroke="#e2e2e2" stroke-width="1"/>
<line x1="459.5" y1="292.5" x2="885.2" y2="292.5" stroke="#e2e2e2" stroke-width="1"/>
<line x1="459.5" y1="308.5" x2="885.2" y2="308.5" stroke="#e2e2e2" stroke-width="1"/>
<line x1="459.5" y1="324.5" x2="885.2" y2="324.5" stroke="#e2e2e2" stroke-width="1"/>
<line x1="459.5" y1="340.5" x2="885.2" y2="340.5" stroke="#e2e2e2" stroke-width="1"/>
<line x1="459.5" y1="356.5" x2="885.2" y2="356.5" stroke="#e2e2e2" stroke-width="1"/>
<line x1="459.5" y1="372.5" x2="885.2" y2="372.5" stroke="#e2e2e2" stroke-width="1"/>
<line x1="459.5" y1="388.5" x2="885.2" y2="388.5" stroke="#e2e2e2" stroke-width="1"/>
<line x1="459.5" y1="404.5" x2="885.2" y2="404.5" stroke="#e2e2e2" stroke-width="1"/>
<line x1="459.5" y1="420.5" x2="885.2" y2="420.5" stroke="#e2e2e2" stroke-width="1"/>
<line x1="459.5" y1="436.5" x2="885.2" y2="436.5" stroke="#e2e2e2" stroke-width="1"/>
<line x1="459.5" y1="452.5" x2="885.2" y2="452.5" stroke="#e2e2e2" stroke-width="1"/>
<line x1="459.5" y1="468.5" x2="885.2" y2="468.5" stroke="#e2e2e2" stroke-width="1"/>
<line x1="459.5" y1="484.5" x2="885.2" y2="484.5" stroke="#e2e2e2" stroke-width="1"/>
<line x1="459.5" y1="500.5" x2="885.2" y2="500.5" stroke="#e2e2e2" stroke-width="1"/>
<line x1="459.5" y1="516.5" x2="885.2" y2="516.5" stroke="#e2e2e2" stroke-width="1"/>
<line x1="459.5" y1="532.5" x2="885.2" y2="532.5" stroke="#e2e2e2" stroke-width="1"/>
<line x1="459.5" y1="548.5" x2="885.2" y2="548.5" stroke="#e2e2e2" stroke-width="1"/>
<line x1="459.5" y1="196.5" x2="459.5" y2="546.5" stroke="#e2e2e2" stroke-width="1"/>
<line x1="498.6" y1="196.5" x2="498.6" y2="546.5" stroke="#e2e2e2" stroke-width="1"/>
<line x1="556.6" y1="196.5" x2="556.6" y2="546.5" stroke="#e2e2e2" stroke-width="1"/>
<line x1="613.9" y1="196.5" x2="613.9" y2="546.5" stroke="#e2e2e2" stroke-width="1"/>
<line x1="652.6" y1="196.5" x2="652.6" y2="546.5" stroke="#e2e2e2" stroke-width="1"/>
<line x1="710.2" y1="196.5" x2="710.2" y2="546.5" stroke="#e2e2e2" stroke-width="1"/>
<line x1="768.0" y1="196.5" x2="768.0" y2="546.5" stroke="#e2e2e2" stroke-width="1"/>
<line x1="825.6" y1="196.5" x2="825.6" y2="546.5" stroke="#e2e2e2" stroke-width="1"/>
<line x1="885.2" y1="196.5" x2="885.2" y2="546.5" stroke="#e2e2e2" stroke-width="1"/>
<line x1="459.5" y1="165.5" x2="459.5" y2="196.5" stroke="#c4c4c4" stroke-width="1"/>
<line x1="498.6" y1="165.5" x2="498.6" y2="196.5" stroke="#c4c4c4" stroke-width="1"/>
<line x1="556.6" y1="165.5" x2="556.6" y2="196.5" stroke="#c4c4c4" stroke-width="1"/>
<line x1="613.9" y1="165.5" x2="613.9" y2="196.5" stroke="#c4c4c4" stroke-width="1"/>
<line x1="652.6" y1="165.5" x2="652.6" y2="196.5" stroke="#c4c4c4" stroke-width="1"/>
<line x1="710.2" y1="165.5" x2="710.2" y2="196.5" stroke="#c4c4c4" stroke-width="1"/>
<line x1="768.0" y1="165.5" x2="768.0" y2="196.5" stroke="#c4c4c4" stroke-width="1"/>
<line x1="825.6" y1="165.5" x2="825.6" y2="196.5" stroke="#c4c4c4" stroke-width="1"/>
<line x1="885.2" y1="165.5" x2="885.2" y2="196.5" stroke="#c4c4c4" stroke-width="1"/>
<line x1="426.3" y1="196.5" x2="897.7" y2="196.5" stroke="#c4c4c4" stroke-width="1"/>
<line x1="459.5" y1="196.5" x2="459.5" y2="546.5" stroke="#c8c8c8" stroke-width="1"/>
<path d="M432.2 202.4 L435.3 204.7 L432.2 207 Z" fill="#444"/>
<rect x="887.3" y="208.2" width="10.2" height="40.4" fill="#cdcdcd"/>
<path d="M890.2 203.6 L892.3 201.4 L894.4 203.6" fill="none" stroke="#606060" stroke-width="0.9"/>
<path d="M890 540 L892.1 542.2 L894.2 540" fill="none" stroke="#606060" stroke-width="0.9"/>
</svg>
<div class="t" style="left:459.5px;width:39.10000000000002px;top:173px;text-align:center;color:#555;line-height:8px">MD<br>(m)</div>
<div class="t" style="left:498.6px;width:58.0px;top:173px;text-align:center;color:#555;line-height:8px">Casing OD<br>(mm)</div>
<div class="t" style="left:556.6px;width:57.299999999999955px;top:173px;text-align:center;color:#555;line-height:8px">Casing Wall<br>(mm)</div>
<div class="t" style="left:613.9px;width:38.700000000000045px;top:173px;text-align:center;color:#555;line-height:8px">Wear<br>(%)</div>
<div class="t" style="left:652.6px;width:57.60000000000002px;top:173px;text-align:center;color:#555;line-height:8px">Remaining Wall<br>(mm)</div>
<div class="t" style="left:710.2px;width:57.799999999999955px;top:173px;text-align:center;color:#555;line-height:8px">Burst Str.<br>(kPa)</div>
<div class="t" style="left:768.0px;width:57.60000000000002px;top:173px;text-align:center;color:#555;line-height:8px">Collapse Str.<br>(kPa)</div>
<div class="t" style="left:825.6px;width:59.60000000000002px;top:173px;text-align:center;color:#555;line-height:8px">Dogleg<br>(&deg;/30m)</div>
<div class="t" style="right:569.1px;top:200.5px;color:#555;font-size:7.3px">1</div>
<div class="t" style="right:528.0px;top:200.5px;color:#555;font-size:7.3px">914.40</div>
<div class="t" style="right:470.0px;top:200.5px;color:#555;font-size:7.3px">177.80</div>
<div class="t" style="right:412.7px;top:200.5px;color:#555;font-size:7.3px">6.86</div>
<div class="t" style="right:374.0px;top:200.5px;color:#555;font-size:7.3px">0.00</div>
<div class="t" style="right:316.4px;top:200.5px;color:#555;font-size:7.3px">6.86</div>
<div class="t" style="right:258.6px;top:200.5px;color:#555;font-size:7.3px">25786.3</div>
<div class="t" style="right:201.0px;top:200.5px;color:#555;font-size:7.3px">13934.3</div>
<div class="t" style="right:141.4px;top:200.5px;color:#555;font-size:7.3px">0.00</div>
<div class="t" style="right:569.1px;top:216.5px;color:#555;font-size:7.3px">2</div>
<div class="t" style="right:528.0px;top:216.5px;color:#555;font-size:7.3px">935.55</div>
<div class="t" style="right:470.0px;top:216.5px;color:#555;font-size:7.3px">177.80</div>
<div class="t" style="right:412.7px;top:216.5px;color:#555;font-size:7.3px">6.86</div>
<div class="t" style="right:374.0px;top:216.5px;color:#555;font-size:7.3px">0.00</div>
<div class="t" style="right:316.4px;top:216.5px;color:#555;font-size:7.3px">6.86</div>
<div class="t" style="right:258.6px;top:216.5px;color:#555;font-size:7.3px">25786.3</div>
<div class="t" style="right:201.0px;top:216.5px;color:#555;font-size:7.3px">13934.3</div>
<div class="t" style="right:141.4px;top:216.5px;color:#555;font-size:7.3px">0.00</div>
<div class="t" style="right:569.1px;top:232.5px;color:#555;font-size:7.3px">3</div>
<div class="t" style="right:528.0px;top:232.5px;color:#555;font-size:7.3px">963.90</div>
<div class="t" style="right:470.0px;top:232.5px;color:#555;font-size:7.3px">177.80</div>
<div class="t" style="right:412.7px;top:232.5px;color:#555;font-size:7.3px">6.86</div>
<div class="t" style="right:374.0px;top:232.5px;color:#555;font-size:7.3px">0.00</div>
<div class="t" style="right:316.4px;top:232.5px;color:#555;font-size:7.3px">6.86</div>
<div class="t" style="right:258.6px;top:232.5px;color:#555;font-size:7.3px">25786.3</div>
<div class="t" style="right:201.0px;top:232.5px;color:#555;font-size:7.3px">13934.3</div>
<div class="t" style="right:141.4px;top:232.5px;color:#555;font-size:7.3px">0.00</div>
<div class="t" style="right:569.1px;top:248.5px;color:#555;font-size:7.3px">4</div>
<div class="t" style="right:528.0px;top:248.5px;color:#555;font-size:7.3px">992.25</div>
<div class="t" style="right:470.0px;top:248.5px;color:#555;font-size:7.3px">177.80</div>
<div class="t" style="right:412.7px;top:248.5px;color:#555;font-size:7.3px">6.86</div>
<div class="t" style="right:374.0px;top:248.5px;color:#555;font-size:7.3px">0.00</div>
<div class="t" style="right:316.4px;top:248.5px;color:#555;font-size:7.3px">6.86</div>
<div class="t" style="right:258.6px;top:248.5px;color:#555;font-size:7.3px">25786.3</div>
<div class="t" style="right:201.0px;top:248.5px;color:#555;font-size:7.3px">13934.3</div>
<div class="t" style="right:141.4px;top:248.5px;color:#555;font-size:7.3px">0.00</div>
<div class="t" style="right:569.1px;top:264.5px;color:#555;font-size:7.3px">5</div>
<div class="t" style="right:528.0px;top:264.5px;color:#555;font-size:7.3px">1020.60</div>
<div class="t" style="right:470.0px;top:264.5px;color:#555;font-size:7.3px">177.80</div>
<div class="t" style="right:412.7px;top:264.5px;color:#555;font-size:7.3px">6.86</div>
<div class="t" style="right:374.0px;top:264.5px;color:#555;font-size:7.3px">0.00</div>
<div class="t" style="right:316.4px;top:264.5px;color:#555;font-size:7.3px">6.86</div>
<div class="t" style="right:258.6px;top:264.5px;color:#555;font-size:7.3px">25786.3</div>
<div class="t" style="right:201.0px;top:264.5px;color:#555;font-size:7.3px">13934.3</div>
<div class="t" style="right:141.4px;top:264.5px;color:#555;font-size:7.3px">0.00</div>
<div class="t" style="right:569.1px;top:280.5px;color:#555;font-size:7.3px">6</div>
<div class="t" style="right:528.0px;top:280.5px;color:#555;font-size:7.3px">1048.95</div>
<div class="t" style="right:470.0px;top:280.5px;color:#555;font-size:7.3px">177.80</div>
<div class="t" style="right:412.7px;top:280.5px;color:#555;font-size:7.3px">6.86</div>
<div class="t" style="right:374.0px;top:280.5px;color:#555;font-size:7.3px">0.00</div>
<div class="t" style="right:316.4px;top:280.5px;color:#555;font-size:7.3px">6.86</div>
<div class="t" style="right:258.6px;top:280.5px;color:#555;font-size:7.3px">25786.3</div>
<div class="t" style="right:201.0px;top:280.5px;color:#555;font-size:7.3px">13934.3</div>
<div class="t" style="right:141.4px;top:280.5px;color:#555;font-size:7.3px">0.00</div>
<div class="t" style="right:569.1px;top:296.5px;color:#555;font-size:7.3px">7</div>
<div class="t" style="right:528.0px;top:296.5px;color:#555;font-size:7.3px">1077.30</div>
<div class="t" style="right:470.0px;top:296.5px;color:#555;font-size:7.3px">177.80</div>
<div class="t" style="right:412.7px;top:296.5px;color:#555;font-size:7.3px">6.86</div>
<div class="t" style="right:374.0px;top:296.5px;color:#555;font-size:7.3px">0.00</div>
<div class="t" style="right:316.4px;top:296.5px;color:#555;font-size:7.3px">6.86</div>
<div class="t" style="right:258.6px;top:296.5px;color:#555;font-size:7.3px">25786.3</div>
<div class="t" style="right:201.0px;top:296.5px;color:#555;font-size:7.3px">13934.3</div>
<div class="t" style="right:141.4px;top:296.5px;color:#555;font-size:7.3px">0.00</div>
<div class="t" style="right:569.1px;top:312.5px;color:#555;font-size:7.3px">8</div>
<div class="t" style="right:528.0px;top:312.5px;color:#555;font-size:7.3px">1105.65</div>
<div class="t" style="right:470.0px;top:312.5px;color:#555;font-size:7.3px">177.80</div>
<div class="t" style="right:412.7px;top:312.5px;color:#555;font-size:7.3px">6.86</div>
<div class="t" style="right:374.0px;top:312.5px;color:#555;font-size:7.3px">0.00</div>
<div class="t" style="right:316.4px;top:312.5px;color:#555;font-size:7.3px">6.86</div>
<div class="t" style="right:258.6px;top:312.5px;color:#555;font-size:7.3px">25786.3</div>
<div class="t" style="right:201.0px;top:312.5px;color:#555;font-size:7.3px">13934.3</div>
<div class="t" style="right:141.4px;top:312.5px;color:#555;font-size:7.3px">0.00</div>
<div class="t" style="right:569.1px;top:328.5px;color:#555;font-size:7.3px">9</div>
<div class="t" style="right:528.0px;top:328.5px;color:#555;font-size:7.3px">1134.00</div>
<div class="t" style="right:470.0px;top:328.5px;color:#555;font-size:7.3px">177.80</div>
<div class="t" style="right:412.7px;top:328.5px;color:#555;font-size:7.3px">6.86</div>
<div class="t" style="right:374.0px;top:328.5px;color:#555;font-size:7.3px">0.00</div>
<div class="t" style="right:316.4px;top:328.5px;color:#555;font-size:7.3px">6.86</div>
<div class="t" style="right:258.6px;top:328.5px;color:#555;font-size:7.3px">25786.3</div>
<div class="t" style="right:201.0px;top:328.5px;color:#555;font-size:7.3px">13934.3</div>
<div class="t" style="right:141.4px;top:328.5px;color:#555;font-size:7.3px">0.00</div>
<div class="t" style="right:569.1px;top:344.5px;color:#555;font-size:7.3px">10</div>
<div class="t" style="right:528.0px;top:344.5px;color:#555;font-size:7.3px">1162.35</div>
<div class="t" style="right:470.0px;top:344.5px;color:#555;font-size:7.3px">177.80</div>
<div class="t" style="right:412.7px;top:344.5px;color:#555;font-size:7.3px">6.86</div>
<div class="t" style="right:374.0px;top:344.5px;color:#555;font-size:7.3px">0.00</div>
<div class="t" style="right:316.4px;top:344.5px;color:#555;font-size:7.3px">6.86</div>
<div class="t" style="right:258.6px;top:344.5px;color:#555;font-size:7.3px">25786.3</div>
<div class="t" style="right:201.0px;top:344.5px;color:#555;font-size:7.3px">13934.3</div>
<div class="t" style="right:141.4px;top:344.5px;color:#555;font-size:7.3px">0.00</div>
<div class="t" style="right:569.1px;top:360.5px;color:#555;font-size:7.3px">11</div>
<div class="t" style="right:528.0px;top:360.5px;color:#555;font-size:7.3px">1190.70</div>
<div class="t" style="right:470.0px;top:360.5px;color:#555;font-size:7.3px">177.80</div>
<div class="t" style="right:412.7px;top:360.5px;color:#555;font-size:7.3px">6.86</div>
<div class="t" style="right:374.0px;top:360.5px;color:#555;font-size:7.3px">0.00</div>
<div class="t" style="right:316.4px;top:360.5px;color:#555;font-size:7.3px">6.86</div>
<div class="t" style="right:258.6px;top:360.5px;color:#555;font-size:7.3px">25786.3</div>
<div class="t" style="right:201.0px;top:360.5px;color:#555;font-size:7.3px">13934.3</div>
<div class="t" style="right:141.4px;top:360.5px;color:#555;font-size:7.3px">0.00</div>
<div class="t" style="right:569.1px;top:376.5px;color:#555;font-size:7.3px">12</div>
<div class="t" style="right:528.0px;top:376.5px;color:#555;font-size:7.3px">1219.05</div>
<div class="t" style="right:470.0px;top:376.5px;color:#555;font-size:7.3px">177.80</div>
<div class="t" style="right:412.7px;top:376.5px;color:#555;font-size:7.3px">6.86</div>
<div class="t" style="right:374.0px;top:376.5px;color:#555;font-size:7.3px">0.00</div>
<div class="t" style="right:316.4px;top:376.5px;color:#555;font-size:7.3px">6.86</div>
<div class="t" style="right:258.6px;top:376.5px;color:#555;font-size:7.3px">25786.3</div>
<div class="t" style="right:201.0px;top:376.5px;color:#555;font-size:7.3px">13934.3</div>
<div class="t" style="right:141.4px;top:376.5px;color:#555;font-size:7.3px">0.00</div>
<div class="t" style="right:569.1px;top:392.5px;color:#555;font-size:7.3px">13</div>
<div class="t" style="right:528.0px;top:392.5px;color:#555;font-size:7.3px">1247.40</div>
<div class="t" style="right:470.0px;top:392.5px;color:#555;font-size:7.3px">177.80</div>
<div class="t" style="right:412.7px;top:392.5px;color:#555;font-size:7.3px">6.86</div>
<div class="t" style="right:374.0px;top:392.5px;color:#555;font-size:7.3px">0.00</div>
<div class="t" style="right:316.4px;top:392.5px;color:#555;font-size:7.3px">6.86</div>
<div class="t" style="right:258.6px;top:392.5px;color:#555;font-size:7.3px">25786.3</div>
<div class="t" style="right:201.0px;top:392.5px;color:#555;font-size:7.3px">13934.3</div>
<div class="t" style="right:141.4px;top:392.5px;color:#555;font-size:7.3px">0.00</div>
<div class="t" style="right:569.1px;top:408.5px;color:#555;font-size:7.3px">14</div>
<div class="t" style="right:528.0px;top:408.5px;color:#555;font-size:7.3px">1275.75</div>
<div class="t" style="right:470.0px;top:408.5px;color:#555;font-size:7.3px">177.80</div>
<div class="t" style="right:412.7px;top:408.5px;color:#555;font-size:7.3px">6.86</div>
<div class="t" style="right:374.0px;top:408.5px;color:#555;font-size:7.3px">0.00</div>
<div class="t" style="right:316.4px;top:408.5px;color:#555;font-size:7.3px">6.86</div>
<div class="t" style="right:258.6px;top:408.5px;color:#555;font-size:7.3px">25786.3</div>
<div class="t" style="right:201.0px;top:408.5px;color:#555;font-size:7.3px">13934.3</div>
<div class="t" style="right:141.4px;top:408.5px;color:#555;font-size:7.3px">0.00</div>
<div class="t" style="right:569.1px;top:424.5px;color:#555;font-size:7.3px">15</div>
<div class="t" style="right:528.0px;top:424.5px;color:#555;font-size:7.3px">1304.10</div>
<div class="t" style="right:470.0px;top:424.5px;color:#555;font-size:7.3px">177.80</div>
<div class="t" style="right:412.7px;top:424.5px;color:#555;font-size:7.3px">6.86</div>
<div class="t" style="right:374.0px;top:424.5px;color:#555;font-size:7.3px">0.00</div>
<div class="t" style="right:316.4px;top:424.5px;color:#555;font-size:7.3px">6.86</div>
<div class="t" style="right:258.6px;top:424.5px;color:#555;font-size:7.3px">25786.3</div>
<div class="t" style="right:201.0px;top:424.5px;color:#555;font-size:7.3px">13934.3</div>
<div class="t" style="right:141.4px;top:424.5px;color:#555;font-size:7.3px">0.00</div>
<div class="t" style="right:569.1px;top:440.5px;color:#555;font-size:7.3px">16</div>
<div class="t" style="right:528.0px;top:440.5px;color:#555;font-size:7.3px">1332.45</div>
<div class="t" style="right:470.0px;top:440.5px;color:#555;font-size:7.3px">177.80</div>
<div class="t" style="right:412.7px;top:440.5px;color:#555;font-size:7.3px">6.86</div>
<div class="t" style="right:374.0px;top:440.5px;color:#555;font-size:7.3px">0.00</div>
<div class="t" style="right:316.4px;top:440.5px;color:#555;font-size:7.3px">6.86</div>
<div class="t" style="right:258.6px;top:440.5px;color:#555;font-size:7.3px">25786.3</div>
<div class="t" style="right:201.0px;top:440.5px;color:#555;font-size:7.3px">13934.3</div>
<div class="t" style="right:141.4px;top:440.5px;color:#555;font-size:7.3px">0.00</div>
<div class="t" style="right:569.1px;top:456.5px;color:#555;font-size:7.3px">17</div>
<div class="t" style="right:528.0px;top:456.5px;color:#555;font-size:7.3px">1360.80</div>
<div class="t" style="right:470.0px;top:456.5px;color:#555;font-size:7.3px">177.80</div>
<div class="t" style="right:412.7px;top:456.5px;color:#555;font-size:7.3px">6.86</div>
<div class="t" style="right:374.0px;top:456.5px;color:#555;font-size:7.3px">0.00</div>
<div class="t" style="right:316.4px;top:456.5px;color:#555;font-size:7.3px">6.86</div>
<div class="t" style="right:258.6px;top:456.5px;color:#555;font-size:7.3px">25786.3</div>
<div class="t" style="right:201.0px;top:456.5px;color:#555;font-size:7.3px">13934.3</div>
<div class="t" style="right:141.4px;top:456.5px;color:#555;font-size:7.3px">0.00</div>
<div class="t" style="right:569.1px;top:472.5px;color:#555;font-size:7.3px">18</div>
<div class="t" style="right:528.0px;top:472.5px;color:#555;font-size:7.3px">1389.15</div>
<div class="t" style="right:470.0px;top:472.5px;color:#555;font-size:7.3px">177.80</div>
<div class="t" style="right:412.7px;top:472.5px;color:#555;font-size:7.3px">6.86</div>
<div class="t" style="right:374.0px;top:472.5px;color:#555;font-size:7.3px">0.00</div>
<div class="t" style="right:316.4px;top:472.5px;color:#555;font-size:7.3px">6.86</div>
<div class="t" style="right:258.6px;top:472.5px;color:#555;font-size:7.3px">25786.3</div>
<div class="t" style="right:201.0px;top:472.5px;color:#555;font-size:7.3px">13934.3</div>
<div class="t" style="right:141.4px;top:472.5px;color:#555;font-size:7.3px">0.00</div>
<div class="t" style="right:569.1px;top:488.5px;color:#555;font-size:7.3px">19</div>
<div class="t" style="right:528.0px;top:488.5px;color:#555;font-size:7.3px">1417.50</div>
<div class="t" style="right:470.0px;top:488.5px;color:#555;font-size:7.3px">177.80</div>
<div class="t" style="right:412.7px;top:488.5px;color:#555;font-size:7.3px">6.86</div>
<div class="t" style="right:374.0px;top:488.5px;color:#555;font-size:7.3px">0.00</div>
<div class="t" style="right:316.4px;top:488.5px;color:#555;font-size:7.3px">6.86</div>
<div class="t" style="right:258.6px;top:488.5px;color:#555;font-size:7.3px">25786.3</div>
<div class="t" style="right:201.0px;top:488.5px;color:#555;font-size:7.3px">13934.3</div>
<div class="t" style="right:141.4px;top:488.5px;color:#555;font-size:7.3px">0.00</div>
<div class="t" style="right:569.1px;top:504.5px;color:#555;font-size:7.3px">20</div>
<div class="t" style="right:528.0px;top:504.5px;color:#555;font-size:7.3px">1445.85</div>
<div class="t" style="right:470.0px;top:504.5px;color:#555;font-size:7.3px">177.80</div>
<div class="t" style="right:412.7px;top:504.5px;color:#555;font-size:7.3px">6.86</div>
<div class="t" style="right:374.0px;top:504.5px;color:#555;font-size:7.3px">0.00</div>
<div class="t" style="right:316.4px;top:504.5px;color:#555;font-size:7.3px">6.86</div>
<div class="t" style="right:258.6px;top:504.5px;color:#555;font-size:7.3px">25786.3</div>
<div class="t" style="right:201.0px;top:504.5px;color:#555;font-size:7.3px">13934.3</div>
<div class="t" style="right:141.4px;top:504.5px;color:#555;font-size:7.3px">0.00</div>
<div class="t" style="right:569.1px;top:520.5px;color:#555;font-size:7.3px">21</div>
<div class="t" style="right:528.0px;top:520.5px;color:#555;font-size:7.3px">1474.20</div>
<div class="t" style="right:470.0px;top:520.5px;color:#555;font-size:7.3px">177.80</div>
<div class="t" style="right:412.7px;top:520.5px;color:#555;font-size:7.3px">6.86</div>
<div class="t" style="right:374.0px;top:520.5px;color:#555;font-size:7.3px">0.00</div>
<div class="t" style="right:316.4px;top:520.5px;color:#555;font-size:7.3px">6.86</div>
<div class="t" style="right:258.6px;top:520.5px;color:#555;font-size:7.3px">25786.3</div>
<div class="t" style="right:201.0px;top:520.5px;color:#555;font-size:7.3px">13934.3</div>
<div class="t" style="right:141.4px;top:520.5px;color:#555;font-size:7.3px">0.00</div>
<div class="t" style="right:569.1px;top:536.5px;color:#555;font-size:7.3px">22</div>
<div class="t" style="right:528.0px;top:536.5px;color:#555;font-size:7.3px">1502.55</div>
<div class="t" style="right:470.0px;top:536.5px;color:#555;font-size:7.3px">177.80</div>
<div class="t" style="right:412.7px;top:536.5px;color:#555;font-size:7.3px">6.86</div>
<div class="t" style="right:374.0px;top:536.5px;color:#555;font-size:7.3px">0.00</div>
<div class="t" style="right:316.4px;top:536.5px;color:#555;font-size:7.3px">6.86</div>
<div class="t" style="right:258.6px;top:536.5px;color:#555;font-size:7.3px">25786.3</div>
<div class="t" style="right:201.0px;top:536.5px;color:#555;font-size:7.3px">13934.3</div>
<div class="t" style="right:141.4px;top:536.5px;color:#555;font-size:7.3px">0.00</div>
<!--/GRID-->
</body></html>
